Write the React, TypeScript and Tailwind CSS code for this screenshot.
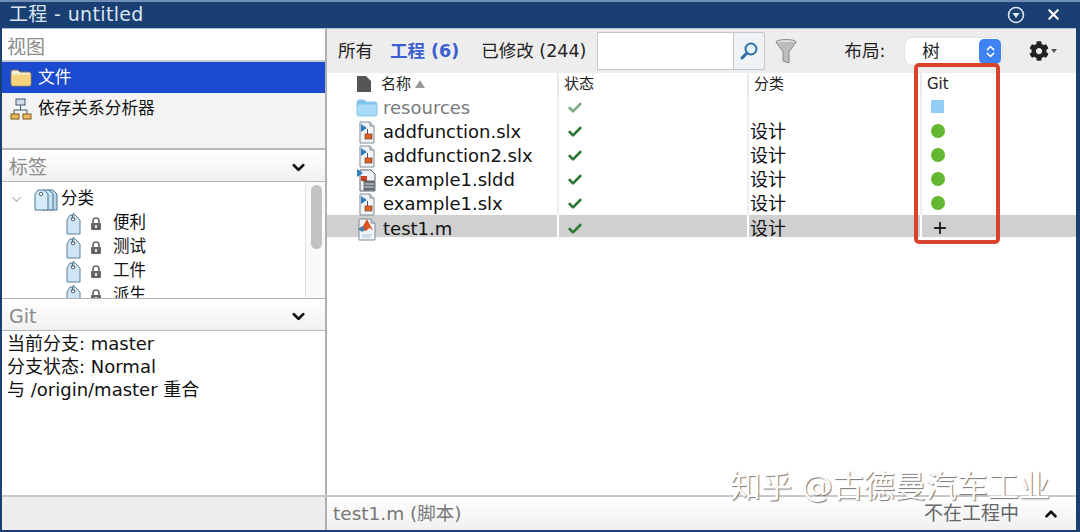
import { Check, ChevronDown, ChevronUp, Plus, X, ChevronsUpDown } from 'lucide-react';
import { FaCog } from 'react-icons/fa';

const font = "font-['DejaVu_Sans','Noto_Sans_CJK_SC',sans-serif]";

const SlxIcon = () => (
  <svg width="20" height="24" viewBox="0 0 20 24">
    <path d="M3 2h10l4 4v17H3z" fill="#f2f5f8" stroke="#7d8a99" />
    <path d="M13 2v4h4" fill="#cfd8e0" stroke="#7d8a99" />
    <path d="M4 4l6 4-6 4z" fill="#2f7fc1" />
    <path d="M10 9h1v5h-1z" fill="#555" />
    <rect x="8" y="14" width="7" height="5" fill="#d8642a" stroke="#8c3a12" strokeWidth="0.7" />
  </svg>
);

const SlddIcon = () => (
  <svg width="24" height="26" viewBox="0 0 24 26">
    <path d="M5 3h11l4 4v17H5z" fill="#eef1f4" stroke="#59636e" />
    <path d="M2 2l6 4-6 4z" fill="#2f7fc1" />
    <rect x="6" y="9" width="6" height="5" fill="#c93f22" />
    <rect x="9" y="14" width="10" height="9" fill="#6f7780" stroke="#3c4248" strokeWidth="0.7" />
    <path d="M9 17h10M9 20h10" stroke="#c8ccd0" />
  </svg>
);

const MIcon = () => (
  <svg width="24" height="24" viewBox="0 0 24 24">
    <path d="M4 2h12l4 4v17H4z" fill="#f2f5f8" stroke="#7d8a99" />
    <path d="M16 2v4h4" fill="#cfd8e0" stroke="#7d8a99" />
    <path d="M3 12l5-3 4-7 3 6 3 5-4-2-3 3z" fill="#d9541e" />
    <path d="M3 12l5-3 2 4-3 2z" fill="#4a7fb5" />
    <path d="M7 18h10M7 20h8" stroke="#a9c4dc" />
  </svg>
);

const FolderIcon = ({ back, front, stroke }: { back: string; front: string; stroke: string }) => (
  <svg width="22" height="20" viewBox="0 0 22 20">
    <path d="M1 4q0-2 2-2h5l2 2h9q2 0 2 2v10q0 2-2 2H3q-2 0-2-2z" fill={back} stroke={stroke} />
    <path d="M1.500 8q0-1.500 1.500-1.500h16q1.500 0 1.500 1.500v8q0 1.500-1.500 1.500H3q-1.500 0-1.500-1.500z" fill={front} />
  </svg>
);

const TagIcon = () => (
  <svg width="17" height="24" viewBox="0 0 17 24">
    <path d="M5 3h5l5 5v14H2V8z" fill="#cfe6f6" stroke="#5a7f9c" />
    <circle cx="8" cy="7" r="1.800" fill="#fff" stroke="#55606a" />
    <path d="M8 7q-2-4 1-6" fill="none" stroke="#55606a" />
  </svg>
);

const TagsIcon = () => (
  <svg width="24" height="24" viewBox="0 0 24 24">
    <path d="M13 2h6l4 4v16h-8z" fill="#b9d6ec" stroke="#4e7591" />
    <path d="M9 2h6l4 4v16H9z" fill="#c6e0f3" stroke="#4e7591" />
    <path d="M4 2h6l4 4v16H1V6z" fill="#d6ebf9" stroke="#4e7591" />
    <circle cx="7" cy="6" r="1.800" fill="#fff" stroke="#55606a" />
  </svg>
);

const Lock = () => (
  <svg width="12" height="13" viewBox="0 0 12 13">
    <path d="M3 6V4a3 3 0 0 1 6 0v2" fill="none" stroke="#666" strokeWidth="1.600" />
    <rect x="1" y="6" width="10" height="7" rx="1" fill="#666" />
    <rect x="5" y="8" width="2" height="3" fill="#ddd" />
  </svg>
);

const HierarchyIcon = () => (
  <svg width="22" height="22" viewBox="0 0 22 22">
    <rect x="6" y="1" width="9" height="6" fill="#cfdcea" stroke="#44586e" />
    <path d="M10.500 7v5M4 16v-4h13v4" fill="none" stroke="#44586e" />
    <rect x="1" y="16" width="8" height="5" fill="#e8b95a" stroke="#7b5a1a" />
    <rect x="13" y="16" width="8" height="5" fill="#e8b95a" stroke="#7b5a1a" />
  </svg>
);

const rows = [
  { name: 'resources', icon: <FolderIcon back="#7fc4ec" front="#a9dcf6" stroke="#8fc7e6" />, muted: true, cat: '', git: 'square' },
  { name: 'addfunction.slx', icon: <SlxIcon />, cat: '设计', git: 'dot' },
  { name: 'addfunction2.slx', icon: <SlxIcon />, cat: '设计', git: 'dot' },
  { name: 'example1.sldd', icon: <SlddIcon />, cat: '设计', git: 'dot' },
  { name: 'example1.slx', icon: <SlxIcon />, cat: '设计', git: 'dot' },
  { name: 'test1.m', icon: <MIcon />, cat: '设计', git: 'plus', selected: true },
];

const SectionHeader = ({ title }: { title: string }) => (
  <div className="flex h-[32px] items-center justify-between bg-gradient-to-b from-white to-[#f1f1f1] pl-[7px] pr-[17px] pt-[3px] border-b border-[#b4b8bc]">
    <span className="text-[19px] text-[#8a8a8a]">{title}</span>
    <ChevronDown size={19} strokeWidth={3.5} className="text-[#111]" />
  </div>
);

export default function App() {
  return (
    <div className={`${font} relative flex h-[532px] w-[1080px] flex-col overflow-hidden bg-[#1a3f73] pb-[2px] pl-[2px] pr-[4px] pt-[3px]`}>
      <div className="absolute left-0 right-0 top-0 h-[2px] bg-[#6f8fb8]" />

      {/* barra de titulo */}
      <div className="flex h-[25px] shrink-0 items-center justify-between pb-[2px] pl-[7px] pr-[14px]">
        <span className="text-[19px] leading-none tracking-[0.35px] text-[#dce6f2]">工程 - untitled</span>
        <div className="flex items-center gap-[20px]">
          <svg width="18" height="18" viewBox="0 0 18 18">
            <circle cx="9" cy="9" r="7.500" fill="none" stroke="#e4ebf4" strokeWidth="1.500" />
            <path d="M5.500 7h7L9 12z" fill="#e4ebf4" />
          </svg>
          <X size={17} strokeWidth={3} className="text-white" />
        </div>
      </div>

      <div className="flex min-h-0 flex-1 flex-col border-t border-[#a9bcd3] bg-white">
        <div className="flex min-h-0 flex-1">
          {/* panel izquierdo */}
          <div className="flex w-[325px] shrink-0 flex-col border-r-2 border-[#b0b0b0]">
            <div className="flex h-[33px] items-center border-b-2 border-[#c4ccd4] bg-white pl-[5px] pt-[5px]">
              <span className="text-[19px] text-[#8a8a8a]">视图</span>
            </div>
            <div className="h-[86px] bg-[#f3f3f3]">
              <div className="flex h-[31px] items-center gap-[6px] bg-[#1d4bd0] pl-[8px] text-[16.7px] text-white">
                <FolderIcon back="#f5f0dc" front="#f6d27a" stroke="#8a7440" />
                <span>文件</span>
              </div>
              <div className="flex h-[31px] items-center gap-[6px] pl-[8px] text-[16.7px] text-[#111]">
                <HierarchyIcon />
                <span>依存关系分析器</span>
              </div>
            </div>
            <div className="border-t-2 border-[#b8b8b8]">
              <SectionHeader title="标签" />
            </div>
            <div className="relative h-[116px] overflow-hidden bg-white pt-[3px] text-[16.5px] text-[#111]">
              <div className="flex h-[24px] items-center pl-[7px] pt-[5px]">
                <ChevronDown size={15} strokeWidth={2} className="text-[#b5b5b5]" />
                <div className="ml-[10px] mr-[3px]"><TagsIcon /></div>
                <span>分类</span>
              </div>
              {['便利', '测试', '工件', '派生'].map((t) => (
                <div key={t} className="flex h-[24px] items-center pl-[63px] pt-[5px]">
                  <TagIcon />
                  <div className="ml-[8px] mr-[11px]"><Lock /></div>
                  <span>{t}</span>
                </div>
              ))}
              <div className="absolute bottom-0 right-0 top-0 w-[20px] border-l border-[#e2e2e2] bg-[#fafafa]">
                <div className="ml-[5px] mt-[3px] h-[64px] w-[11px] rounded-full bg-[#c2c2c2]" />
              </div>
            </div>
            <div className="border-t border-[#b0b0b0]">
              <SectionHeader title="Git" />
            </div>
            <div className="flex-1 bg-white pl-[5px] pt-[1px] text-[18px] leading-[23px] text-[#111]">
              <div>当前分支: master</div>
              <div>分支状态: Normal</div>
              <div>与 /origin/master 重合</div>
            </div>
          </div>

          {/* panel derecho */}
          <div className="flex min-w-0 flex-1 flex-col">
            <div className="flex h-[44px] shrink-0 items-center bg-[#ededed] pl-[11px] text-[17.5px] text-[#222]">
              <span>所有</span>
              <span className="ml-[17px] font-bold text-[#3a5fd0]">工程 (6)</span>
              <span className="ml-[22px]">已修改 (244)</span>
              <div className="ml-[11px] h-[38px] w-[137px] border border-[#c6c6c6] bg-white" />
              <div className="flex h-[38px] w-[31px] items-center justify-center rounded-r-[3px] border border-l-0 border-[#c6c6c6] bg-[#f0f3f6]">
                <svg width="20" height="20" viewBox="0 0 20 20">
                  <circle cx="12" cy="8" r="5.500" fill="#e8f3fb" stroke="#2f6ea8" strokeWidth="2" />
                  <path d="M8 12l-5 5" stroke="#2f6ea8" strokeWidth="3" strokeLinecap="round" />
                </svg>
              </div>
              <svg className="ml-[10px]" width="22" height="26" viewBox="0 0 22 26">
                <ellipse cx="11" cy="4" rx="10" ry="2.500" fill="#ddd" stroke="#8b8b8b" />
                <path d="M1 4l7 10v9l6 2V14l7-10" fill="#bdbdbd" stroke="#8b8b8b" />
              </svg>
              <span className="ml-[47px]">布局:</span>
              <div className="ml-[20px] flex h-[27px] w-[97px] items-center justify-between rounded-[7px] bg-white pl-[17px] pr-[1px] shadow-[0_0_2px_#ccc]">
                <span>树</span>
                <div className="flex h-[25px] w-[22px] items-center justify-center rounded-[5px] bg-[#3f82f5]">
                  <ChevronsUpDown size={15} strokeWidth={2.5} className="text-white" />
                </div>
              </div>
              <div className="ml-[27px] flex items-center">
                <FaCog size={20} className="text-[#222]" />
                <div className="ml-[2px] h-0 w-0 border-x-[3px] border-t-[4px] border-x-transparent border-t-[#555]" />
              </div>
            </div>

            <div className="min-h-0 flex-1 bg-white">
              {/* cabecera tabla */}
              <div className="grid h-[21px] grid-cols-[230px_190px_173px_1fr] items-center text-[15px] text-[#222]">
                <div className="flex items-center pl-[30px]">
                  <svg width="14" height="16" viewBox="0 0 14 16">
                    <path d="M0 0h9l5 5v11H0z" fill="#555" />
                  </svg>
                  <span className="ml-[10px]">名称</span>
                  <div className="ml-[4px] h-0 w-0 border-x-[5px] border-b-[8px] border-x-transparent border-b-[#999]" />
                </div>
                <div className="border-l-2 border-[#e8e8e8] pl-[5px]">状态</div>
                <div className="border-l-2 border-[#e8e8e8] pl-[5px]">分类</div>
                <div className="border-l-2 border-[#e8e8e8] pl-[5px]">Git</div>
              </div>
              {rows.map((r) => (
                <div
                  key={r.name}
                  className={`grid grid-cols-[230px_190px_173px_1fr] items-center text-[18px] ${r.selected ? 'mt-[1px] h-[22px] bg-[#d0d0d0]' : 'h-[24px]'}`}
                >
                  <div className="flex items-center pl-[27px]">
                    <div className="flex w-[26px] justify-center">{r.icon}</div>
                    <span className={`ml-[3px] ${r.muted ? 'text-[#7a7a7a]' : 'text-[#111]'}`}>{r.name}</span>
                  </div>
                  <div className={`flex h-full items-center border-l-2 pl-[8px] ${r.selected ? 'border-white' : 'border-[#eeeeee]'}`}>
                    <Check size={16} strokeWidth={4} className={r.muted ? 'text-[#7fae86]' : 'text-[#2f7a35]'} />
                  </div>
                  <div className={`flex h-full items-center border-l-2 pl-[1px] text-[#111] ${r.selected ? 'border-white' : 'border-[#eeeeee]'}`}>
                    {r.cat}
                  </div>
                  <div className={`flex h-full items-center border-l-2 pb-[2px] pl-[9px] ${r.selected ? 'border-white' : 'border-[#eeeeee]'}`}>
                    {r.git === 'square' && <div className="h-[13px] w-[13px] bg-[#93cdf8]" />}
                    {r.git === 'dot' && <div className="h-[14px] w-[14px] rounded-full bg-[#62b82f]" />}
                    {r.git === 'plus' && <Plus size={18} strokeWidth={2.5} className="text-[#222]" />}
                  </div>
                </div>
              ))}
            </div>
          </div>
        </div>

        {/* barra de estado */}
        <div className="flex h-[35px] shrink-0 border-t-2 border-[#c8c8c8]">
          <div className="w-[325px] shrink-0 border-r-2 border-[#b0b0b0] bg-[#eeeeee]" />
          <div className="flex flex-1 items-center justify-between bg-gradient-to-b from-white to-[#f0f0f0] pl-[6px] pr-[16px] text-[18.5px] text-[#777]">
            <span>test1.m (脚本)</span>
            <div className="flex items-center gap-[23px]">
              <span className="text-[19px] text-[#666]">不在工程中</span>
              <ChevronUp size={18} strokeWidth={3.5} className="text-[#111]" />
            </div>
          </div>
        </div>
      </div>

      {/* anotacion roja */}
      <div className="absolute left-[914px] top-[63px] h-[181px] w-[86px] rounded-[5px] border-[4px] border-[#d9432c]" />

      {/* marca de agua */}
      <div className="absolute left-[730px] top-[466px] text-[31px] leading-[40px] text-white [text-shadow:1px_1px_1px_#777]">
        知乎 @古德曼汽车工业
      </div>
    </div>
  );
}
